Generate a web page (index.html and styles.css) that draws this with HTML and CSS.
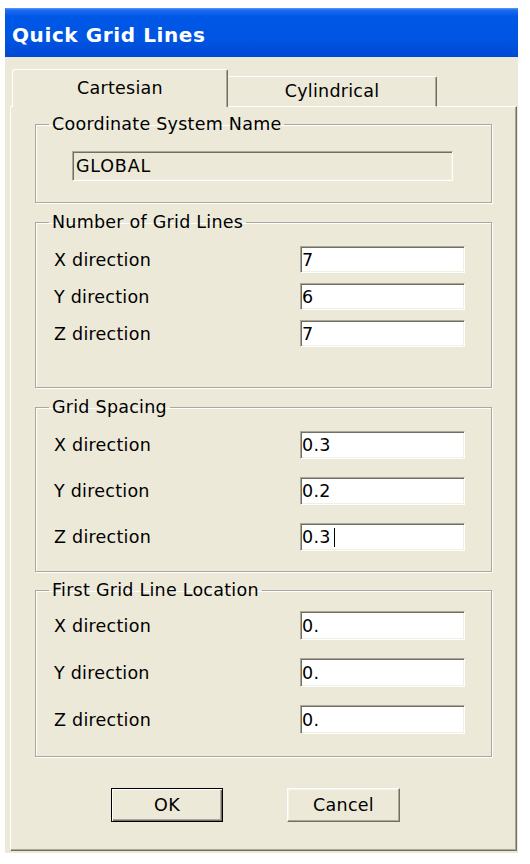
FILE: index.html
```html
<!DOCTYPE html>
<html lang="en">
<head>
    <meta charset="UTF-8">
    <meta name="viewport" content="width=device-width, initial-scale=1.0">
    <title>Quick Grid Lines</title>
    <link rel="stylesheet" href="styles.css">
</head>
<body>
    <div class="dialog">
        <div class="titlebar">Quick Grid Lines</div>

        <div class="dialog-body">
            <div class="tabs">
                <div class="tab tab-active">Cartesian</div>
                <div class="tab">Cylindrical</div>
            </div>

            <div class="panel">
                <fieldset class="group group-name">
                    <legend>Coordinate System Name</legend>
                    <input class="field field-wide" type="text" value="GLOBAL" disabled>
                </fieldset>

                <fieldset class="group group-count">
                    <legend>Number of Grid Lines</legend>
                    <div class="rows">
                        <label>X direction</label>
                        <input class="field" type="text" value="7">
                        <label>Y direction</label>
                        <input class="field" type="text" value="6">
                        <label>Z direction</label>
                        <input class="field" type="text" value="7">
                    </div>
                </fieldset>

                <fieldset class="group group-spacing">
                    <legend>Grid Spacing</legend>
                    <div class="rows">
                        <label>X direction</label>
                        <input class="field" type="text" value="0.3">
                        <label>Y direction</label>
                        <input class="field" type="text" value="0.2">
                        <label>Z direction</label>
                        <div class="field-wrap">
                            <input class="field" type="text" value="0.3">
                            <span class="caret"></span>
                        </div>
                    </div>
                </fieldset>

                <fieldset class="group group-first">
                    <legend>First Grid Line Location</legend>
                    <div class="rows">
                        <label>X direction</label>
                        <input class="field" type="text" value="0.">
                        <label>Y direction</label>
                        <input class="field" type="text" value="0.">
                        <label>Z direction</label>
                        <input class="field" type="text" value="0.">
                    </div>
                </fieldset>

                <div class="buttons">
                    <button type="button" class="btn btn-default">OK</button>
                    <button type="button" class="btn">Cancel</button>
                </div>
            </div>
        </div>
    </div>
</body>
</html>
```

FILE: styles.css
```css
body {
    margin: 0;
    padding: 0;
    background: #fff;
    font-family: "DejaVu Sans", Verdana, sans-serif;
    font-size: 17.5px;
    letter-spacing: 0.25px;
    color: #000;
}

.dialog {
    margin: 8px 0 0 5px;
    width: 513px;
    height: 845px;
    background-color: #ece9d8;
}

/* blue xp caption */
.titlebar {
    height: 44px;
    line-height: 44px;
    padding: 5px 0 0 7px;
    color: #fff;
    font-weight: bold;
    font-size: 20px;
    letter-spacing: 0.6px;
    background: linear-gradient(#5a9cff 0, #1f6cf0 2px, #0058e6 8px, #0055e3 60%, #0049d4 100%);
}

.dialog-body {
    padding: 13px 1px 0 5px;
}

.tabs {
    display: flex;
    align-items: flex-end;
    height: 37px;
    padding-left: 2px;
    position: relative;
    z-index: 1;
    margin-bottom: -1px;
}

.tab {
    box-sizing: border-box;
    width: 209px;
    height: 31px;
    line-height: 29px;
    text-align: center;
    border-top: 1px solid #fff;
    border-right: 1px solid #716f64;
    box-shadow: inset -1px 0 0 #aca899;
    border-top-right-radius: 2px;
    border-bottom: 1px solid #fff;
}

.tab-active {
    width: 216px;
    height: 38px;
    line-height: 36px;
    border-left: 1px solid #fff;
    border-bottom: none;
    border-top-left-radius: 3px;
    background-color: #ece9d8;
}

.panel {
    box-sizing: border-box;
    width: 507px;
    height: 745px;
    padding: 7px 0 0 0;
    border-top: 1px solid #fff;
    border-left: 1px solid #fff;
    border-right: 1px solid #716f64;
    border-bottom: 1px solid #716f64;
    box-shadow: inset -1px -1px 0 #aca899;
}

.group {
    box-sizing: border-box;
    width: 457px;
    margin: 0 0 9px 24px;
    padding: 0;
    border: 1px solid #aca899;
    box-shadow: inset 1px 1px 0 #fff, 1px 1px 0 #fff;
    min-inline-size: 0;
}

.group legend {
    margin-left: 13px;
    padding: 0 3px;
    line-height: 20px;
}

.group-name {
    padding: 17px 0 21px 0;
    margin-bottom: 9px;
}

.group-count {
    padding: 14px 0 40px 0;
    margin-bottom: 9px;
}

.group-spacing {
    padding: 14px 0 20px 0;
    margin-bottom: 8px;
}

.group-first {
    padding: 11px 0 22px 0;
}

.rows {
    display: grid;
    grid-template-columns: 246px 165px;
    align-items: center;
    padding-left: 18px;
}

.group-count .rows {
    grid-auto-rows: 27px;
    row-gap: 10px;
}

.group-spacing .rows {
    grid-auto-rows: 28px;
    row-gap: 18px;
}

.group-first .rows {
    grid-auto-rows: 29px;
    row-gap: 18px;
}

/* sunken edit box */
.field {
    box-sizing: border-box;
    width: 165px;
    height: 100%;
    margin: 0;
    padding: 0 0 0 1px;
    font-family: inherit;
    font-size: 17.5px;
    letter-spacing: 0.25px;
    color: #000;
    background-color: #fff;
    border: 1px solid;
    border-color: #aca899 #fff #fff #aca899;
    box-shadow: inset 1px 1px 0 #716f64, inset -1px -1px 0 #f1efe2;
    outline: none;
}

.field-wide {
    width: 381px;
    height: 30px;
    margin-left: 36px;
    padding-left: 3px;
    letter-spacing: 0.8px;
    background-color: #ece9d8;
}

.field:disabled {
    color: #000;
    -webkit-text-fill-color: #000;
    opacity: 1;
}

.field-wrap {
    position: relative;
    height: 100%;
}

.caret {
    position: absolute;
    left: 34px;
    top: 5px;
    width: 1px;
    height: 19px;
    background-color: #000;
}

.buttons {
    display: flex;
    gap: 64px;
    margin-top: 31px;
    padding-left: 100px;
}

.btn {
    box-sizing: border-box;
    width: 113px;
    height: 34px;
    padding: 0;
    font-family: inherit;
    font-size: 17.5px;
    letter-spacing: 0.25px;
    color: #000;
    background-color: #ece9d8;
    border: 1px solid;
    border-color: #fff #716f64 #716f64 #fff;
    box-shadow: inset -1px -1px 0 #aca899, inset 1px 1px 0 #f5f4ec;
}

.btn-default {
    width: 112px;
    border: 1px solid #000;
    box-shadow: inset 1px 1px 0 #fff, inset -1px -1px 0 #716f64, inset -2px -2px 0 #aca899;
}
```
